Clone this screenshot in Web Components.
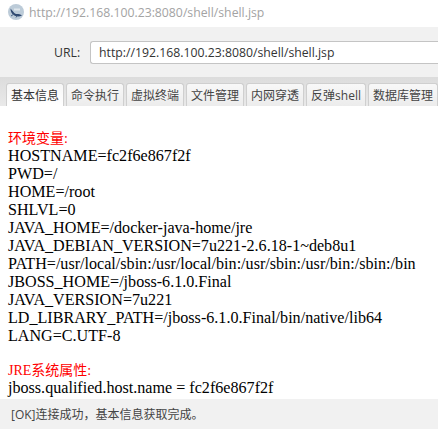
<!DOCTYPE html>
<html>
<head>
<meta charset="utf-8">
<title>shell</title>
<style>
  html, body { margin: 0; height: 100%; overflow: hidden; background: #fff; }
  body { display: flex; flex-direction: column; width: 438px; height: 429px; }
</style>
</head>
<body>
<title-bar>http://192.168.100.23:8080/shell/shell.jsp</title-bar>
<url-panel url="http://192.168.100.23:8080/shell/shell.jsp"></url-panel>
<tab-bar>
  <tab-item active>基本信息</tab-item>
  <tab-item>命令执行</tab-item>
  <tab-item>虚拟终端</tab-item>
  <tab-item>文件管理</tab-item>
  <tab-item>内网穿透</tab-item>
  <tab-item>反弹shell</tab-item>
  <tab-item>数据库管理</tab-item>
</tab-bar>
<info-panel>
  <info-section heading="环境变量:">
    <div>HOSTNAME=fc2f6e867f2f</div>
    <div>PWD=/</div>
    <div>HOME=/root</div>
    <div>SHLVL=0</div>
    <div>JAVA_HOME=/docker-java-home/jre</div>
    <div>JAVA_DEBIAN_VERSION=7u221-2.6.18-1~deb8u1</div>
    <div>PATH=/usr/local/sbin:/usr/local/bin:/usr/sbin:/usr/bin:/sbin:/bin</div>
    <div>JBOSS_HOME=/jboss-6.1.0.Final</div>
    <div>JAVA_VERSION=7u221</div>
    <div>LD_LIBRARY_PATH=/jboss-6.1.0.Final/bin/native/lib64</div>
    <div>LANG=C.UTF-8</div>
  </info-section>
  <info-section heading="JRE系统属性:">
    <div>jboss.qualified.host.name = fc2f6e867f2f</div>
  </info-section>
</info-panel>
<status-bar>[OK]连接成功，基本信息获取完成。</status-bar>

<script>
const UI_FONT = '"Open Sans", "Noto Sans CJK SC", sans-serif';

class TitleBar extends HTMLElement {
  constructor() {
    super();
    this.attachShadow({ mode: 'open' }).innerHTML = `
      <style>
        :host { display: flex; align-items: center; gap: 5px; height: 24px; padding: 0 0 3px 8px; flex: none;
          font: 12.25px ${UI_FONT}; color: #a3a3a3; background: #fff; }
        svg { width: 16px; height: 16px; flex: none; }
      </style>
      <svg viewBox="0 0 16 16">
        <circle cx="8" cy="8" r="8" fill="#bccbd8"/>
        <path d="M2.500 4.500c0 3 1 5 3 6.500 2 1.500 5 2 8.500 .5-1.500-1.200-3.500-1.500-5-1.500-1.500 0-2.500-.5-3.500-2z" fill="#2e4870"/>
        <path d="M6 4.500h6v2H6z" fill="#dfe6ec"/>
        <path d="M3 12l3-2M8 13.500l1-2" stroke="#4a6588" fill="none"/>
      </svg>
      <slot></slot>`;
  }
}

class UrlPanel extends HTMLElement {
  constructor() {
    super();
    const url = this.getAttribute('url');
    this.attachShadow({ mode: 'open' }).innerHTML = `
      <style>
        :host { display: flex; align-items: center; gap: 10px; height: 50px; padding-left: 54px; flex: none;
          background: #f1f1f1; font: 12.25px ${UI_FONT}; color: #333; }
        .field { flex: 1; height: 21px; line-height: 21px; padding-left: 8px; background: #fff;
          border: 1px solid #c4c4c4; border-right: 0; border-radius: 3px 0 0 3px; white-space: nowrap; }
      </style>
      <span>URL:</span>
      <div class="field">${url}</div>`;
  }
}

class TabBar extends HTMLElement {
  constructor() {
    super();
    this.attachShadow({ mode: 'open' }).innerHTML = `
      <style>
        :host { display: flex; align-items: flex-end; gap: 2px; height: 29px; padding-left: 6px; flex: none;
          box-sizing: border-box; background: linear-gradient(#dcdcdc, #e9e9e9); overflow: hidden; }
      </style>
      <slot></slot>`;
  }
}

class TabItem extends HTMLElement {
  constructor() {
    super();
    this.attachShadow({ mode: 'open' }).innerHTML = `
      <style>
        :host { display: block; box-sizing: border-box; height: 23px; padding: 0 4px; flex: none;
          font: 12px/23px ${UI_FONT}; color: #444; background: linear-gradient(#f8f8f8, #ececec); white-space: nowrap;
          border: 1px solid #cfcfcf; border-bottom: 0; border-radius: 3px 3px 0 0; }
        :host([active]) { background: linear-gradient(#f6f6f6, #fff); color: #333; }
      </style>
      <slot></slot>`;
  }
}

class InfoPanel extends HTMLElement {
  constructor() {
    super();
    this.attachShadow({ mode: 'open' }).innerHTML = `
      <style>
        :host { display: flex; flex-direction: column; gap: 17px; flex: 1; min-height: 0; overflow: hidden;
          padding: 24px 0 0 8px; background: #fff; white-space: nowrap;
          font: 16.12px/18px "Liberation Serif", "Noto Sans CJK SC", serif; color: #000; }
      </style>
      <slot></slot>`;
  }
}

class InfoSection extends HTMLElement {
  constructor() {
    super();
    const heading = this.getAttribute('heading');
    this.attachShadow({ mode: 'open' }).innerHTML = `
      <style>
        :host { display: block; }
        .heading { font-size: 14px; line-height: 17px; color: #f00; }
      </style>
      <div class="heading">${heading}</div>
      <slot></slot>`;
  }
}

class StatusBar extends HTMLElement {
  constructor() {
    super();
    this.attachShadow({ mode: 'open' }).innerHTML = `
      <style>
        :host { display: flex; align-items: center; height: 30px; padding-left: 11px; flex: none;
          background: #f1f1f1; font: 12px ${UI_FONT}; color: #444; }
      </style>
      <slot></slot>`;
  }
}

customElements.define('title-bar', TitleBar);
customElements.define('url-panel', UrlPanel);
customElements.define('tab-bar', TabBar);
customElements.define('tab-item', TabItem);
customElements.define('info-panel', InfoPanel);
customElements.define('info-section', InfoSection);
customElements.define('status-bar', StatusBar);
</script>
</body>
</html>
